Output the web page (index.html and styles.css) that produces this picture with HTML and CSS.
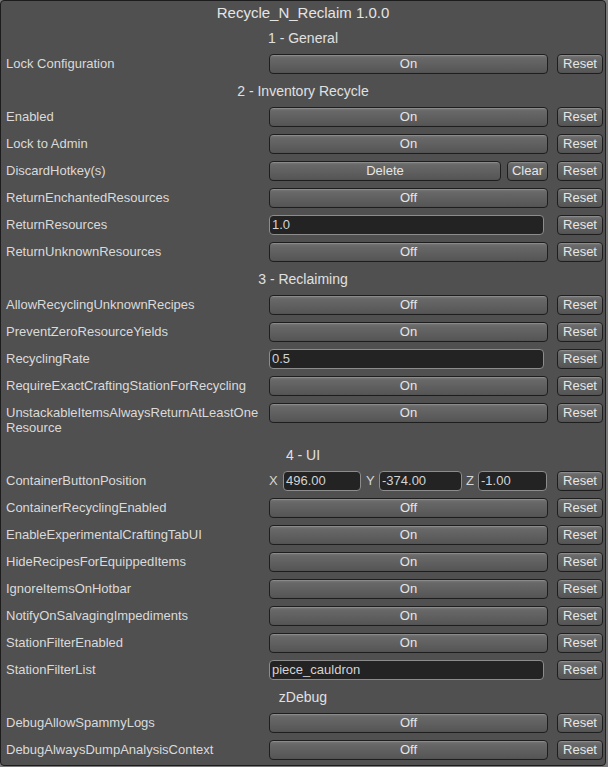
FILE: index.html
```html
<!DOCTYPE html>
<html>
<head>
<meta charset="utf-8">
<link rel="stylesheet" href="styles.css">
</head>
<body>
<div class="window">
  <div class="title">Recycle_N_Reclaim 1.0.0</div>

  <div class="section">1 - General</div>
  <div class="row"><div class="label">Lock Configuration</div><div class="ctl"><button class="btn wide">On</button></div><button class="btn reset">Reset</button></div>

  <div class="section">2 - Inventory Recycle</div>
  <div class="row"><div class="label">Enabled</div><div class="ctl"><button class="btn wide">On</button></div><button class="btn reset">Reset</button></div>
  <div class="row"><div class="label">Lock to Admin</div><div class="ctl"><button class="btn wide">On</button></div><button class="btn reset">Reset</button></div>
  <div class="row"><div class="label">DiscardHotkey(s)</div><div class="ctl"><button class="btn key">Delete</button><button class="btn clear">Clear</button></div><button class="btn reset">Reset</button></div>
  <div class="row"><div class="label">ReturnEnchantedResources</div><div class="ctl"><button class="btn wide">Off</button></div><button class="btn reset">Reset</button></div>
  <div class="row"><div class="label">ReturnResources</div><div class="ctl"><div class="field full">1.0</div></div><button class="btn reset">Reset</button></div>
  <div class="row"><div class="label">ReturnUnknownResources</div><div class="ctl"><button class="btn wide">Off</button></div><button class="btn reset">Reset</button></div>

  <div class="section">3 - Reclaiming</div>
  <div class="row"><div class="label">AllowRecyclingUnknownRecipes</div><div class="ctl"><button class="btn wide">Off</button></div><button class="btn reset">Reset</button></div>
  <div class="row"><div class="label">PreventZeroResourceYields</div><div class="ctl"><button class="btn wide">On</button></div><button class="btn reset">Reset</button></div>
  <div class="row"><div class="label">RecyclingRate</div><div class="ctl"><div class="field full">0.5</div></div><button class="btn reset">Reset</button></div>
  <div class="row"><div class="label">RequireExactCraftingStationForRecycling</div><div class="ctl"><button class="btn wide">On</button></div><button class="btn reset">Reset</button></div>
  <div class="row"><div class="label">UnstackableItemsAlwaysReturnAtLeastOne Resource</div><div class="ctl"><button class="btn wide">On</button></div><button class="btn reset">Reset</button></div>

  <div class="section">4 - UI</div>
  <div class="row"><div class="label">ContainerButtonPosition</div><div class="ctl vec"><span class="axis ax-x">X</span><div class="field fx">496.00</div><span class="axis ax-y">Y</span><div class="field fy">-374.00</div><span class="axis ax-z">Z</span><div class="field fz">-1.00</div></div><button class="btn reset">Reset</button></div>
  <div class="row"><div class="label">ContainerRecyclingEnabled</div><div class="ctl"><button class="btn wide">Off</button></div><button class="btn reset">Reset</button></div>
  <div class="row"><div class="label">EnableExperimentalCraftingTabUI</div><div class="ctl"><button class="btn wide">On</button></div><button class="btn reset">Reset</button></div>
  <div class="row"><div class="label">HideRecipesForEquippedItems</div><div class="ctl"><button class="btn wide">On</button></div><button class="btn reset">Reset</button></div>
  <div class="row"><div class="label">IgnoreItemsOnHotbar</div><div class="ctl"><button class="btn wide">On</button></div><button class="btn reset">Reset</button></div>
  <div class="row"><div class="label">NotifyOnSalvagingImpediments</div><div class="ctl"><button class="btn wide">On</button></div><button class="btn reset">Reset</button></div>
  <div class="row"><div class="label">StationFilterEnabled</div><div class="ctl"><button class="btn wide">On</button></div><button class="btn reset">Reset</button></div>
  <div class="row"><div class="label">StationFilterList</div><div class="ctl"><div class="field full">piece_cauldron</div></div><button class="btn reset">Reset</button></div>

  <div class="section">zDebug</div>
  <div class="row"><div class="label">DebugAllowSpammyLogs</div><div class="ctl"><button class="btn wide">Off</button></div><button class="btn reset">Reset</button></div>
  <div class="row"><div class="label">DebugAlwaysDumpAnalysisContext</div><div class="ctl"><button class="btn wide">Off</button></div><button class="btn reset">Reset</button></div>
</div>
</body>
</html>
```

FILE: styles.css
```css
html, body {
  margin: 0;
  padding: 0;
  background: #7a7a7a;
}

body {
  font-family: "Liberation Sans", Arial, sans-serif;
  font-size: 13px;
  color: #d9d9d9;
}

.window {
  box-sizing: border-box;
  width: 606px;
  height: 766px;
  background: #505050;
  border: 1px solid #1c1c1c;
  border-radius: 4px;
  display: flex;
  flex-direction: column;
  gap: 7px;
  overflow: hidden;
}

.title {
  height: 20px;
  padding-top: 3px;
  box-sizing: border-box;
  line-height: 17px;
  font-size: 15px;
  text-align: center;
  color: #e4e4e4;
}

.section {
  height: 19px;
  box-sizing: border-box;
  padding-top: 2px;
  line-height: 16px;
  font-size: 14px;
  text-align: center;
  color: #e0e0e0;
}

.row {
  display: flex;
  align-items: flex-start;
}

.label {
  box-sizing: border-box;
  width: 268px;
  flex: none;
  padding: 2px 5px 3px 5px;
  line-height: 15px;
  color: #dadada;
}

.ctl {
  width: 279px;
  flex: none;
  display: flex;
  align-items: center;
}

.btn {
  box-sizing: border-box;
  height: 20px;
  padding: 0;
  margin: 0;
  font: inherit;
  font-size: 13px;
  line-height: 18px;
  color: #e6e6e6;
  text-align: center;
  border: 1px solid #1e1e1e;
  border-radius: 4px;
  background: linear-gradient(#7a7a7a 0px, #686868 3px, #5f5f5f 10px, #565656 17px, #4a4a4a 19px);
  box-shadow: inset 0 1px 0 rgba(255, 255, 255, 0.14);
}

.wide { width: 279px; }
.key { width: 232px; }
.clear { width: 41px; margin-left: 6px; }
.reset { width: 46px; margin-left: 9px; flex: none; }

.field {
  box-sizing: border-box;
  height: 20px;
  line-height: 18px;
  padding-left: 2px;
  background: #232323;
  border: 1px solid #8c8c8c;
  border-radius: 4px;
  color: #d4d4d4;
  white-space: nowrap;
  overflow: hidden;
}

.full { width: 275px; }

.axis {
  line-height: 20px;
  color: #d6d6d6;
  flex: none;
}
.ax-x { width: 14px; }
.ax-y { width: 13px; margin-left: 5px; }
.ax-z { width: 12px; margin-left: 4px; }
.fx { width: 78px; }
.fy { width: 83px; }
.fz { width: 69px; }
```
